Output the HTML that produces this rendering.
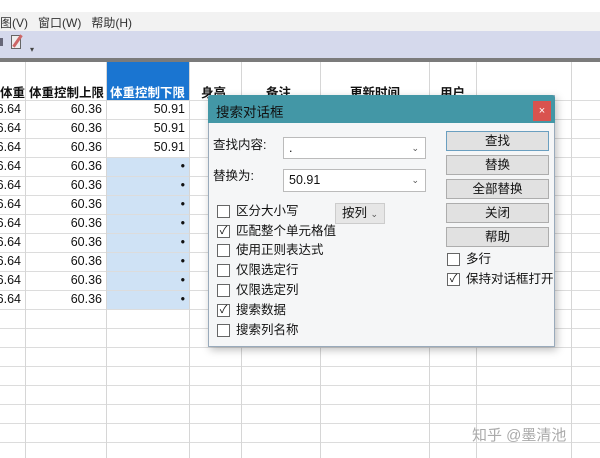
<!DOCTYPE html>
<html><head><meta charset="utf-8"><style>
*{margin:0;padding:0;box-sizing:border-box}
body{width:600px;height:458px;overflow:hidden;background:#fff;position:relative;font-family:"Liberation Sans","Noto Sans CJK SC",sans-serif;font-size:12.5px;color:#111}
.a{position:absolute}
.hl{position:absolute;left:0;width:600px;height:1px;background:#dcdcdc}
.vl{position:absolute;top:62px;height:396px;width:1px;background:#d6d6d6}
.c{position:absolute;height:19px;line-height:19px;font-size:12.5px}
.cb{position:absolute;width:13px;height:13px;border:1px solid #666;background:#fff;font-size:11px;line-height:11px;text-align:center}
.lb{position:absolute;font-size:12.5px;line-height:16px}
.btn{position:absolute;left:446px;width:103px;height:20px;background:#e1e1e1;border:1px solid #adadad;text-align:center;line-height:18px;font-size:12.5px}
.inp{position:absolute;left:283px;width:143px;border:1px solid #bbb;background:#fff;padding-left:5px;font-size:12.5px}
.dd{position:absolute;right:6px;font-size:9px;color:#555}
.hd{position:absolute;top:82px;font-weight:bold;font-size:12.5px}
</style></head><body>
<div class="a" style="left:0;top:12px;width:600px;height:19px;background:#f2f2f2"></div>
<div class="a" style="left:0;top:14px;font-size:12px;color:#333">图(V)&nbsp;&nbsp;&nbsp;窗口(W)&nbsp;&nbsp;&nbsp;帮助(H)</div>
<div class="a" style="left:0;top:31px;width:600px;height:27px;background:#d5d9ec"></div>
<div class="a" style="left:0;top:38px;width:3px;height:8px;background:#667"></div>
<div class="a" style="left:11px;top:35px;width:10px;height:14px;border:1px solid #666;background:#eee"></div>
<div class="a" style="left:16px;top:34px;width:3px;height:14px;background:#c66;transform:rotate(35deg)"></div>
<div class="a" style="left:30px;top:45px;font-size:8px;color:#444">▾</div>
<div class="a" style="left:0;top:58px;width:600px;height:4px;background:#7b7b7b"></div>
<div class="a" style="left:106px;top:62px;width:83px;height:38px;background:#1a75d1"></div>
<div class="a" style="left:106px;top:157px;width:83px;height:152px;background:#cfe2f5"></div>
<div class="hl" style="top:100px"></div><div class="hl" style="top:119px"></div><div class="hl" style="top:138px"></div><div class="hl" style="top:157px"></div><div class="hl" style="top:176px"></div><div class="hl" style="top:195px"></div><div class="hl" style="top:214px"></div><div class="hl" style="top:233px"></div><div class="hl" style="top:252px"></div><div class="hl" style="top:271px"></div><div class="hl" style="top:290px"></div><div class="hl" style="top:309px"></div><div class="hl" style="top:328px"></div><div class="hl" style="top:347px"></div><div class="hl" style="top:366px"></div><div class="hl" style="top:385px"></div><div class="hl" style="top:404px"></div><div class="hl" style="top:423px"></div><div class="hl" style="top:442px"></div>
<div class="vl" style="left:25px"></div><div class="vl" style="left:106px"></div><div class="vl" style="left:189px"></div><div class="vl" style="left:241px"></div><div class="vl" style="left:320px"></div><div class="vl" style="left:429px"></div><div class="vl" style="left:476px"></div><div class="vl" style="left:571px"></div>
<div class="hd" style="left:0">体重</div>
<div class="hd" style="left:29px">体重控制上限</div>
<div class="hd" style="left:110px;color:#fff">体重控制下限</div>
<div class="hd" style="left:201px">身高</div>
<div class="hd" style="left:266px">备注</div>
<div class="hd" style="left:350px">更新时间</div>
<div class="hd" style="left:440px">用户</div>
<div id="rows"></div>
<script>
var h='';for(var i=0;i<11;i++){var y=100+19*i;h+='<div class="c" style="top:'+y+'px;left:-20px;width:41px;text-align:right">56.64</div><div class="c" style="top:'+y+'px;left:25px;width:77px;text-align:right">60.36</div>';h+='<div class="c" style="top:'+y+'px;left:106px;width:79px;text-align:right">'+(i<3?'50.91':'•')+'</div>';}
document.getElementById('rows').innerHTML=h;
</script>
<div class="a" style="left:208px;top:95px;width:347px;height:252px;background:#f5f6f7;border:1px solid #9ab;box-shadow:2px 3px 8px rgba(0,0,0,.25)"></div>
<div class="a" style="left:208px;top:95px;width:347px;height:28px;background:#4397a6;border-radius:3px 3px 0 0"></div>
<div class="a" style="left:216px;top:101px;font-size:13.5px;color:#111">搜索对话框</div>
<div class="a" style="left:533px;top:101px;width:18px;height:20px;background:#d9534f;color:#fff;text-align:center;line-height:20px;font-size:11px">×</div>
<div class="lb" style="left:213px;top:137px">查找内容:</div>
<div class="lb" style="left:213px;top:168px">替换为:</div>
<div class="inp" style="top:137px;height:22px;line-height:20px">.<span class="dd">⌄</span></div>
<div class="inp" style="top:169px;height:23px;line-height:21px">50.91<span class="dd">⌄</span></div>
<div class="a" style="left:335px;top:203px;width:50px;height:21px;background:#e6e6e6;border:1px solid #ccc;line-height:19px;padding-left:6px">按列 <span style="font-size:9px;color:#555">⌄</span></div>
<div class="cb" style="left:217px;top:205px"></div><div class="lb" style="left:236px;top:203px">区分大小写</div>
<div class="cb" style="left:217px;top:225px">✓</div><div class="lb" style="left:236px;top:223px">匹配整个单元格值</div>
<div class="cb" style="left:217px;top:244px"></div><div class="lb" style="left:236px;top:242px">使用正则表达式</div>
<div class="cb" style="left:217px;top:264px"></div><div class="lb" style="left:236px;top:262px">仅限选定行</div>
<div class="cb" style="left:217px;top:284px"></div><div class="lb" style="left:236px;top:282px">仅限选定列</div>
<div class="cb" style="left:217px;top:304px">✓</div><div class="lb" style="left:236px;top:302px">搜索数据</div>
<div class="cb" style="left:217px;top:324px"></div><div class="lb" style="left:236px;top:322px">搜索列名称</div>
<div class="btn" style="top:131px;border-color:#6a9fc0">查找</div>
<div class="btn" style="top:155px">替换</div>
<div class="btn" style="top:179px">全部替换</div>
<div class="btn" style="top:203px">关闭</div>
<div class="btn" style="top:227px">帮助</div>
<div class="cb" style="left:447px;top:253px"></div><div class="lb" style="left:466px;top:251px">多行</div>
<div class="cb" style="left:447px;top:273px">✓</div><div class="lb" style="left:466px;top:271px">保持对话框打开</div>
<div class="a" style="left:472px;top:424px;font-size:15px;color:#aaa">知乎 @墨清池</div>
</body></html>
